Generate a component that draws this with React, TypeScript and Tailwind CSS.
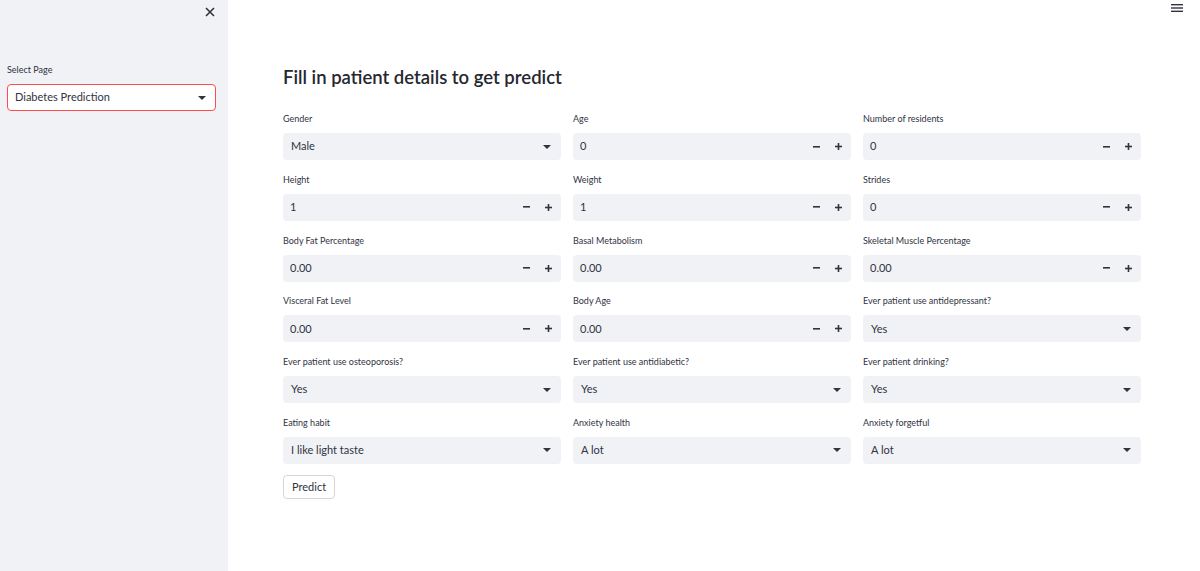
import React from "react";

const Caret = () => (
  <svg width="8" height="4" viewBox="0 0 8 4" className="shrink-0">
    <path d="M0 0 L8 0 L4 4 Z" fill="#31333f" />
  </svg>
);

function SelectBox({ value }: { value: string }) {
  return (
    <div className="h-[27px] bg-[#f0f2f6] rounded-[4px] flex items-center justify-between pl-[8px] pr-[10px] text-[11px] text-[#31333f]">
      <span>{value}</span>
      <Caret />
    </div>
  );
}

function NumberBox({ value }: { value: string }) {
  return (
    <div className="h-[27px] bg-[#f0f2f6] rounded-[4px] flex items-center text-[11px] text-[#31333f]">
      <span className="pl-[7px] flex-1">{value}</span>
      <div className="flex items-center h-full pr-[2px]">
        <div className="w-[22px] h-full flex items-center justify-center">
          <svg width="7" height="2" viewBox="0 0 7 2"><rect width="7" height="1.6" fill="#31333f" /></svg>
        </div>
        <div className="w-[22px] h-full flex items-center justify-center">
          <svg width="7" height="7" viewBox="0 0 7 7">
            <rect y="2.7" width="7" height="1.6" fill="#31333f" />
            <rect x="2.7" width="1.6" height="7" fill="#31333f" />
          </svg>
        </div>
      </div>
    </div>
  );
}

type Field = { label: string; kind: "select" | "number"; value: string };

const rows: Field[][] = [
  [
    { label: "Gender", kind: "select", value: "Male" },
    { label: "Age", kind: "number", value: "0" },
    { label: "Number of residents", kind: "number", value: "0" },
  ],
  [
    { label: "Height", kind: "number", value: "1" },
    { label: "Weight", kind: "number", value: "1" },
    { label: "Strides", kind: "number", value: "0" },
  ],
  [
    { label: "Body Fat Percentage", kind: "number", value: "0.00" },
    { label: "Basal Metabolism", kind: "number", value: "0.00" },
    { label: "Skeletal Muscle Percentage", kind: "number", value: "0.00" },
  ],
  [
    { label: "Visceral Fat Level", kind: "number", value: "0.00" },
    { label: "Body Age", kind: "number", value: "0.00" },
    { label: "Ever patient use antidepressant?", kind: "select", value: "Yes" },
  ],
  [
    { label: "Ever patient use osteoporosis?", kind: "select", value: "Yes" },
    { label: "Ever patient use antidiabetic?", kind: "select", value: "Yes" },
    { label: "Ever patient drinking?", kind: "select", value: "Yes" },
  ],
  [
    { label: "Eating habit", kind: "select", value: "I like light taste" },
    { label: "Anxiety health", kind: "select", value: "A lot" },
    { label: "Anxiety forgetful", kind: "select", value: "A lot" },
  ],
];

export default function App() {
  return (
    <div
      className="w-[1200px] h-[571px] flex bg-white text-[#31333f] overflow-hidden"
      style={{ fontFamily: '"Source Sans Pro", Lato, "Noto Sans", sans-serif' }}
    >
      <aside className="w-[228px] h-full bg-[#f0f2f6] shrink-0 flex flex-col px-[7px]">
        <div className="flex justify-end pt-[5px] pr-[4px]">
          <svg width="14" height="14" viewBox="0 0 14 14">
            <path d="M3 3 L11 11 M11 3 L3 11" stroke="#31333f" strokeWidth="1.6" />
          </svg>
        </div>
        <div className="mt-[45px] text-[9px] leading-[12px]">Select Page</div>
        <div className="mt-[8px] h-[27px] w-[209px] bg-white border border-[#ff4b4b] rounded-[4px] flex items-center justify-between pl-[7px] pr-[9px] text-[11px]">
          <span>Diabetes Prediction</span>
          <Caret />
        </div>
      </aside>
      <main className="flex-1 relative">
        <div className="absolute top-[3px] right-[17px]">
          <svg width="12" height="10" viewBox="0 0 12 10">
            <rect y="1" width="12" height="1.4" fill="#31333f" />
            <rect y="4.3" width="12" height="1.4" fill="#31333f" />
            <rect y="7.6" width="12" height="1.4" fill="#31333f" />
          </svg>
        </div>
        <div className="pl-[55px] pt-[64px] w-[912px] box-content">
          <h1 className="text-[18.5px] leading-[26px] font-semibold text-[#262730]">
            Fill in patient details to get predict
          </h1>
          <div className="mt-[23px] flex flex-col gap-[13.8px]">
            {rows.map((row, i) => (
              <div key={i} className="grid grid-cols-[278px_278px_278px] gap-x-[12px]">
                {row.map((f) => (
                  <div key={f.label} className="flex flex-col">
                    <div className="text-[9px] leading-[12px] mb-[8px]">{f.label}</div>
                    {f.kind === "select" ? <SelectBox value={f.value} /> : <NumberBox value={f.value} />}
                  </div>
                ))}
              </div>
            ))}
          </div>
          <button className="mt-[11px] h-[24px] px-[8px] border border-[#d6d6d9] rounded-[4px] bg-white text-[11px]">
            Predict
          </button>
        </div>
      </main>
    </div>
  );
}
